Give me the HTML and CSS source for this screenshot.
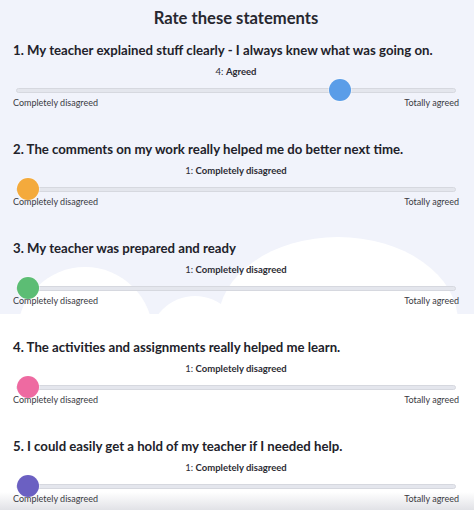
FILE: index.html
```html
<!DOCTYPE html>
<html lang="en">
<head>
<meta charset="utf-8">
<title>Rate these statements</title>
<link rel="stylesheet" href="styles.css">
</head>
<body>
<main class="survey">
  <svg class="backdrop" width="474" height="510" viewBox="0 0 474 510" aria-hidden="true">
    <rect x="0" y="0" width="474" height="510" fill="#f1f3fb"/>
    <g fill="#ffffff">
      <ellipse cx="338" cy="322" rx="120" ry="85"/>
      <circle cx="85" cy="335" r="68"/>
      <circle cx="195" cy="342" r="46"/>
      <rect x="0" y="314" width="474" height="196"/>
    </g>
  </svg>

  <h1 class="title">Rate these statements</h1>

  <section class="question">
    <h2 class="prompt">1. My teacher explained stuff clearly - I always knew what was going on.</h2>
    <p class="value">4: <b>Agreed</b></p>
    <input class="scale scale-blue" type="range" min="1" max="5" value="4">
    <div class="ends"><span>Completely disagreed</span><span>Totally agreed</span></div>
  </section>

  <section class="question">
    <h2 class="prompt">2. The comments on my work really helped me do better next time.</h2>
    <p class="value">1: <b>Completely disagreed</b></p>
    <input class="scale scale-orange" type="range" min="1" max="5" value="1">
    <div class="ends"><span>Completely disagreed</span><span>Totally agreed</span></div>
  </section>

  <section class="question">
    <h2 class="prompt">3. My teacher was prepared and ready</h2>
    <p class="value">1: <b>Completely disagreed</b></p>
    <input class="scale scale-green" type="range" min="1" max="5" value="1">
    <div class="ends"><span>Completely disagreed</span><span>Totally agreed</span></div>
  </section>

  <section class="question">
    <h2 class="prompt">4. The activities and assignments really helped me learn.</h2>
    <p class="value">1: <b>Completely disagreed</b></p>
    <input class="scale scale-pink" type="range" min="1" max="5" value="1">
    <div class="ends"><span>Completely disagreed</span><span>Totally agreed</span></div>
  </section>

  <section class="question">
    <h2 class="prompt">5. I could easily get a hold of my teacher if I needed help.</h2>
    <p class="value">1: <b>Completely disagreed</b></p>
    <input class="scale scale-purple" type="range" min="1" max="5" value="1">
    <div class="ends"><span>Completely disagreed</span><span>Totally agreed</span></div>
  </section>

  <div class="fade"></div>
</main>
</body>
</html>
```

FILE: styles.css
```css
* {
  box-sizing: border-box;
}

html, body {
  margin: 0;
  padding: 0;
  background: #ffffff;
}

body {
  font-family: Lato, "Liberation Sans", sans-serif;
  color: #26262e;
}

.survey {
  position: relative;
  width: 474px;
  height: 510px;
  overflow: hidden;
  padding: 6px 15px 0 13px;
  display: flex;
  flex-direction: column;
  gap: 30px;
}

.backdrop {
  position: absolute;
  left: 0;
  top: 0;
  z-index: 0;
}

.title,
.question {
  position: relative;
  z-index: 1;
}

.title {
  margin: 0 0 -20px;
  height: 24px;
  line-height: 24px;
  font-size: 16.6px;
  font-weight: 700;
  text-align: center;
  color: #27272f;
}

.question {
  display: flex;
  flex-direction: column;
}

.prompt {
  margin: 0;
  height: 20px;
  line-height: 20px;
  font-size: 13.2px;
  font-weight: 700;
  color: #22222a;
  white-space: nowrap;
}

.value {
  margin: 5px 0 0;
  height: 14px;
  line-height: 14px;
  font-size: 9.5px;
  text-align: center;
  color: #2c2c34;
}

.value b {
  font-weight: 700;
}

/* range slider: flat rounded track with a solid coloured knob */
.scale {
  -webkit-appearance: none;
  appearance: none;
  display: block;
  width: 440px;
  height: 14px;
  margin: 4px 0 0 3px;
  padding: 0;
  background: transparent;
}

.scale::-webkit-slider-runnable-track {
  height: 5px;
  border-radius: 3px;
  background: #e4e6ed;
  border: 1px solid #d6d8df;
}

.scale::-webkit-slider-thumb {
  -webkit-appearance: none;
  appearance: none;
  width: 22px;
  height: 22px;
  margin-top: -9.5px;
  border-radius: 50%;
  border: none;
  background: var(--knob);
  box-shadow: 0 0 0 1px rgba(255, 255, 255, 0.35);
}

.scale-blue   { --knob: #5a9de8; }
.scale-orange { --knob: #f4aa3c; }
.scale-green  { --knob: #5cbd74; }
.scale-pink   { --knob: #ee6aa1; }
.scale-purple { --knob: #6b60c2; }

.ends {
  display: flex;
  justify-content: space-between;
  height: 12px;
  line-height: 12px;
  font-size: 9px;
  color: #3a3a42;
}

.fade {
  position: absolute;
  left: 0;
  right: 0;
  bottom: 0;
  height: 18px;
  z-index: 0;
  background: linear-gradient(to bottom, rgba(230, 231, 236, 0), rgba(222, 223, 228, 0.9));
  pointer-events: none;
}
```
